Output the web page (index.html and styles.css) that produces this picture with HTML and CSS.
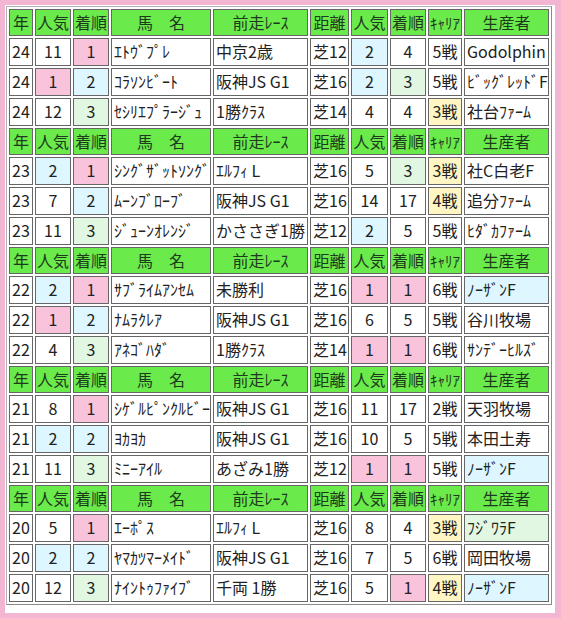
FILE: index.html
```html
<!DOCTYPE html>
<html lang="ja">
<head>
<meta charset="utf-8">
<title>阪神JF 過去データ</title>
<link rel="stylesheet" href="styles.css">
</head>
<body>
<div class="frame">
<table class="tbl">
<colgroup>
<col class="c-yr"><col class="c-pop"><col class="c-rank"><col class="c-name"><col class="c-prev"><col class="c-dist"><col class="c-pop2"><col class="c-rank2"><col class="c-car"><col class="c-brd">
</colgroup>
<tbody>
<tr class="hd"><th>年</th><th>人気</th><th>着順</th><th>馬　名</th><th>前走ﾚｰｽ</th><th>距離</th><th>人気</th><th>着順</th><th class="hk">ｷｬﾘｱ</th><th>生産者</th></tr>
<tr><td>24</td><td>11</td><td class="p">1</td><td class="l">ｴﾄｳﾞﾌﾟﾚ</td><td class="l">中京2歳</td><td class="l">芝12</td><td class="b">2</td><td>4</td><td>5戦</td><td class="l">Godolphin</td></tr>
<tr><td>24</td><td class="p">1</td><td class="b">2</td><td class="l">ｺﾗｿﾝﾋﾞｰﾄ</td><td class="l">阪神JS G1</td><td class="l">芝16</td><td class="b">2</td><td class="g">3</td><td>5戦</td><td class="l">ﾋﾞｯｸﾞﾚｯﾄﾞF</td></tr>
<tr><td>24</td><td>12</td><td class="g">3</td><td class="l">ｾｼﾘｴﾌﾟﾗｰｼﾞｭ</td><td class="l">1勝ｸﾗｽ</td><td class="l">芝14</td><td>4</td><td>4</td><td class="y">3戦</td><td class="l">社台ﾌｧｰﾑ</td></tr>
<tr class="hd"><th>年</th><th>人気</th><th>着順</th><th>馬　名</th><th>前走ﾚｰｽ</th><th>距離</th><th>人気</th><th>着順</th><th class="hk">ｷｬﾘｱ</th><th>生産者</th></tr>
<tr><td>23</td><td class="b">2</td><td class="p">1</td><td class="l">ｼﾝｸﾞｻﾞｯﾄｿﾝｸﾞ</td><td class="l">ｴﾙﾌｨ L</td><td class="l">芝16</td><td>5</td><td class="g">3</td><td class="y">3戦</td><td class="l">社C白老F</td></tr>
<tr><td>23</td><td>7</td><td class="b">2</td><td class="l">ﾑｰﾝﾌﾞﾛｰﾌﾞ</td><td class="l">阪神JS G1</td><td class="l">芝16</td><td>14</td><td>17</td><td class="y">4戦</td><td class="l">追分ﾌｧｰﾑ</td></tr>
<tr><td>23</td><td>11</td><td class="g">3</td><td class="l">ｼﾞｭｰﾝｵﾚﾝｼﾞ</td><td class="l">かささぎ1勝</td><td class="l">芝12</td><td class="b">2</td><td>5</td><td>5戦</td><td class="l">ﾋﾀﾞｶﾌｧｰﾑ</td></tr>
<tr class="hd"><th>年</th><th>人気</th><th>着順</th><th>馬　名</th><th>前走ﾚｰｽ</th><th>距離</th><th>人気</th><th>着順</th><th class="hk">ｷｬﾘｱ</th><th>生産者</th></tr>
<tr><td>22</td><td class="b">2</td><td class="p">1</td><td class="l">ｻﾌﾞﾗｲﾑｱﾝｾﾑ</td><td class="l">未勝利</td><td class="l">芝16</td><td class="p">1</td><td class="p">1</td><td>6戦</td><td class="l b">ﾉｰｻﾞﾝF</td></tr>
<tr><td>22</td><td class="p">1</td><td class="b">2</td><td class="l">ﾅﾑﾗｸﾚｱ</td><td class="l">阪神JS G1</td><td class="l">芝16</td><td>6</td><td>5</td><td>5戦</td><td class="l">谷川牧場</td></tr>
<tr><td>22</td><td>4</td><td class="g">3</td><td class="l">ｱﾈｺﾞﾊﾀﾞ</td><td class="l">1勝ｸﾗｽ</td><td class="l">芝14</td><td class="p">1</td><td class="p">1</td><td>6戦</td><td class="l">ｻﾝﾃﾞｰﾋﾙｽﾞ</td></tr>
<tr class="hd"><th>年</th><th>人気</th><th>着順</th><th>馬　名</th><th>前走ﾚｰｽ</th><th>距離</th><th>人気</th><th>着順</th><th class="hk">ｷｬﾘｱ</th><th>生産者</th></tr>
<tr><td>21</td><td>8</td><td class="p">1</td><td class="l">ｼｹﾞﾙﾋﾟﾝｸﾙﾋﾞｰ</td><td class="l">阪神JS G1</td><td class="l">芝16</td><td>11</td><td>17</td><td>2戦</td><td class="l">天羽牧場</td></tr>
<tr><td>21</td><td class="b">2</td><td class="b">2</td><td class="l">ﾖｶﾖｶ</td><td class="l">阪神JS G1</td><td class="l">芝16</td><td>10</td><td>5</td><td>5戦</td><td class="l">本田土寿</td></tr>
<tr><td>21</td><td>11</td><td class="g">3</td><td class="l">ﾐﾆｰｱｲﾙ</td><td class="l">あざみ1勝</td><td class="l">芝12</td><td class="p">1</td><td class="p">1</td><td>5戦</td><td class="l b">ﾉｰｻﾞﾝF</td></tr>
<tr class="hd"><th>年</th><th>人気</th><th>着順</th><th>馬　名</th><th>前走ﾚｰｽ</th><th>距離</th><th>人気</th><th>着順</th><th class="hk">ｷｬﾘｱ</th><th>生産者</th></tr>
<tr><td>20</td><td>5</td><td class="p">1</td><td class="l">ｴｰﾎﾟｽ</td><td class="l">ｴﾙﾌｨ L</td><td class="l">芝16</td><td>8</td><td>4</td><td class="y">3戦</td><td class="l g">ﾌｼﾞﾜﾗF</td></tr>
<tr><td>20</td><td class="b">2</td><td class="b">2</td><td class="l">ﾔﾏｶﾂﾏｰﾒｲﾄﾞ</td><td class="l">阪神JS G1</td><td class="l">芝16</td><td>7</td><td>5</td><td>6戦</td><td class="l">岡田牧場</td></tr>
<tr><td>20</td><td>12</td><td class="g">3</td><td class="l">ﾅｲﾝﾄｩﾌｧｲﾌﾞ</td><td class="l">千両 1勝</td><td class="l">芝16</td><td>5</td><td class="p">1</td><td class="y">4戦</td><td class="l b">ﾉｰｻﾞﾝF</td></tr>
</tbody>
</table>
</div>
</body>
</html>
```

FILE: styles.css
```css
html, body {
  margin: 0;
  padding: 0;
  background: #ffffff;
}

.frame {
  box-sizing: border-box;
  width: 561px;
  height: 618px;
  border: 5px solid #f3b6d2;
  border-right-width: 6px;
  background: #ffffff;
  padding: 1px 0 0 1px;
}

.tbl {
  table-layout: fixed;
  width: 546px;
  border-collapse: separate;
  border-spacing: 2px;
  border: 1px solid #8a8a8a;
  border-top-color: #b0b0b0;
  border-left-color: #b0b0b0;
  font-family: "Noto Sans CJK JP", "Noto Sans", sans-serif;
  font-size: 16px;
  line-height: 1.2;
  color: #222222;
}

.c-yr { width: 24px; }
.c-pop { width: 36px; }
.c-rank { width: 36px; }
.c-name { width: 100px; }
.c-prev { width: 95px; }
.c-dist { width: 39px; }
.c-pop2 { width: 37px; }
.c-rank2 { width: 36px; }
.c-car { width: 34px; }
.c-brd { width: 85px; }

.tbl tr { height: 28px; }
.tbl tr.hd { height: 27px; }

.tbl th,
.tbl td {
  border: 1px solid #666666;
  padding: 0 1px;
  text-align: center;
  vertical-align: middle;
  white-space: nowrap;
  overflow: hidden;
  font-weight: normal;
}

.tbl th {
  background: #6beb4b;
  color: #1e3a1e;
}

.tbl th.hk {
  font-size: 15px;
}

.tbl td.l {
  text-align: left;
  padding-left: 2px;
}

.tbl td.p { background: #f9c3dc; }
.tbl td.b { background: #ddf6ff; }
.tbl td.g { background: #e1f7e1; }
.tbl td.y { background: #fff6c4; }
```
